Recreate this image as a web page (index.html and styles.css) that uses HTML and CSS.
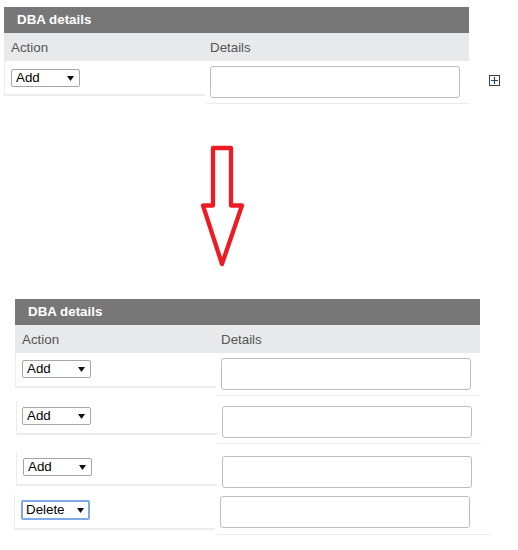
FILE: index.html
```html
<!DOCTYPE html>
<html>
<head>
<meta charset="utf-8">
<link rel="stylesheet" href="styles.css">
</head>
<body>
<div class="top">
  <div class="panel">
    <div class="panel-head">DBA details</div>
    <div class="panel-sub"><span class="col-action">Action</span><span class="col-details">Details</span></div>
    <div class="row">
      <div class="cell-left t1"><div class="sel"><span>Add</span><svg class="tri" width="7" height="5" viewBox="0 0 7 5"><path d="M0 0H7L3.5 5Z" fill="#111"/></svg></div></div>
      <div class="cell-right t1"><div class="field"></div></div>
    </div>
  </div>
  <svg class="plus" width="11" height="11" viewBox="0 0 11 11"><rect x="0.5" y="0.5" width="10" height="10" fill="#fff" stroke="#3f3f3f"/><path d="M5.5 2V9M2 5.5H9" stroke="#23466b" stroke-width="1.2"/></svg>
</div>

<svg class="arrow" width="50" height="128" viewBox="0 0 50 128"><path d="M15 5H33V62.5H44L24 121L5 62.5H15Z" fill="none" stroke="#ed1c24" stroke-width="4.3" stroke-linejoin="round"/></svg>

<div class="panel panel-b">
  <div class="panel-head">DBA details</div>
  <div class="panel-sub"><span class="col-action">Action</span><span class="col-details">Details</span></div>
  <div class="row">
    <div class="cell-left b1"><div class="sel"><span>Add</span><svg class="tri" width="7" height="5" viewBox="0 0 7 5"><path d="M0 0H7L3.5 5Z" fill="#111"/></svg></div></div>
    <div class="cell-right b1"><div class="field"></div></div>
  </div>
  <div class="row">
    <div class="cell-left b2"><div class="sel"><span>Add</span><svg class="tri" width="7" height="5" viewBox="0 0 7 5"><path d="M0 0H7L3.5 5Z" fill="#111"/></svg></div></div>
    <div class="cell-right b2"><div class="field"></div></div>
  </div>
  <div class="row">
    <div class="cell-left b3"><div class="sel"><span>Add</span><svg class="tri" width="7" height="5" viewBox="0 0 7 5"><path d="M0 0H7L3.5 5Z" fill="#111"/></svg></div></div>
    <div class="cell-right b3"><div class="field"></div></div>
  </div>
  <div class="row">
    <div class="cell-left b4"><div class="sel sel-focus"><span>Delete</span><svg class="tri" width="7" height="5" viewBox="0 0 7 5"><path d="M0 0H7L3.5 5Z" fill="#111"/></svg></div></div>
    <div class="cell-right b4"><div class="field"></div></div>
  </div>
</div>
</body>
</html>
```
FILE: styles.css
```css
html, body {
  margin: 0;
  padding: 0;
  background: #fff;
}
body {
  font-family: "Liberation Sans", Arial, sans-serif;
  font-size: 13.33px;
  color: #000;
}
.top {
  display: flex;
  align-items: flex-start;
  padding: 7px 0 0 4px;
}
.panel {
  width: 465px;
  flex: none;
}
.panel-b {
  margin-left: 15px;
  margin-top: 28px;
}
.panel-head {
  height: 26px;
  line-height: 26px;
  background: #777777;
  color: #fff;
  font-weight: bold;
  font-size: 13.33px;
  padding-left: 13px;
}
.panel-sub {
  height: 28px;
  line-height: 29px;
  background: #e8e9ea;
  color: #555;
  display: flex;
}
.col-action {
  width: 199px;
  padding-left: 7px;
}
.row {
  display: flex;
  align-items: flex-start;
}
.cell-left {
  box-sizing: border-box;
  width: 201px;
  flex: none;
  border-left: 1px solid #ececec;
  border-bottom: 2px solid #ececec;
}
.cell-right {
  box-sizing: border-box;
  flex: none;
  border-bottom: 1px solid #ececec;
}
.cell-left.t1 { height: 35px; padding: 8px 0 0 6px; }
.cell-right.t1 { margin-left: 1px; width: 263px; height: 43px; padding: 5px 0 0 4px; }

.cell-left.b1 { height: 35px; padding: 7px 0 0 6px; }
.cell-right.b1 { width: 264px; height: 43px; padding: 5px 0 0 5px; }

.cell-left.b2 { margin-left: 1px; margin-top: 5px; height: 34px; padding: 6px 0 0 5px; }
.cell-right.b2 { width: 264px; height: 48px; padding: 10px 0 0 5px; }

.cell-left.b3 { margin-left: 1px; margin-top: 8px; height: 34px; padding: 6px 0 0 6px; }
.cell-right.b3 { width: 264px; height: 44px; padding: 12px 0 0 5px; border-bottom: none; }

.cell-left.b4 { margin-left: -1px; margin-top: 7px; height: 35px; padding: 5px 0 0 6px; }
.cell-right.b4 { margin-left: 2px; width: 274px; height: 47px; padding: 8px 0 0 3px; }

.sel {
  box-sizing: border-box;
  width: 69px;
  height: 18px;
  border: 1px solid #a6a6a6;
  border-radius: 2px;
  background: #fff;
  display: flex;
  align-items: center;
  justify-content: space-between;
  padding: 0 5px 0 4px;
  font-size: 13.33px;
  line-height: 16px;
  color: #000;
}
.sel-focus {
  height: 20px;
  border: 2px solid #7fa8e6;
  padding: 0 4px 0 3px;
}
.tri {
  display: block;
}
.field {
  box-sizing: border-box;
  width: 250px;
  height: 32px;
  border: 1px solid #bdbdbd;
  border-radius: 3px;
  background: #fff;
}
.plus {
  display: block;
  flex: none;
  margin-left: 20px;
  margin-top: 68px;
}
.arrow {
  display: block;
  margin: 39px 0 0 198px;
}
```
